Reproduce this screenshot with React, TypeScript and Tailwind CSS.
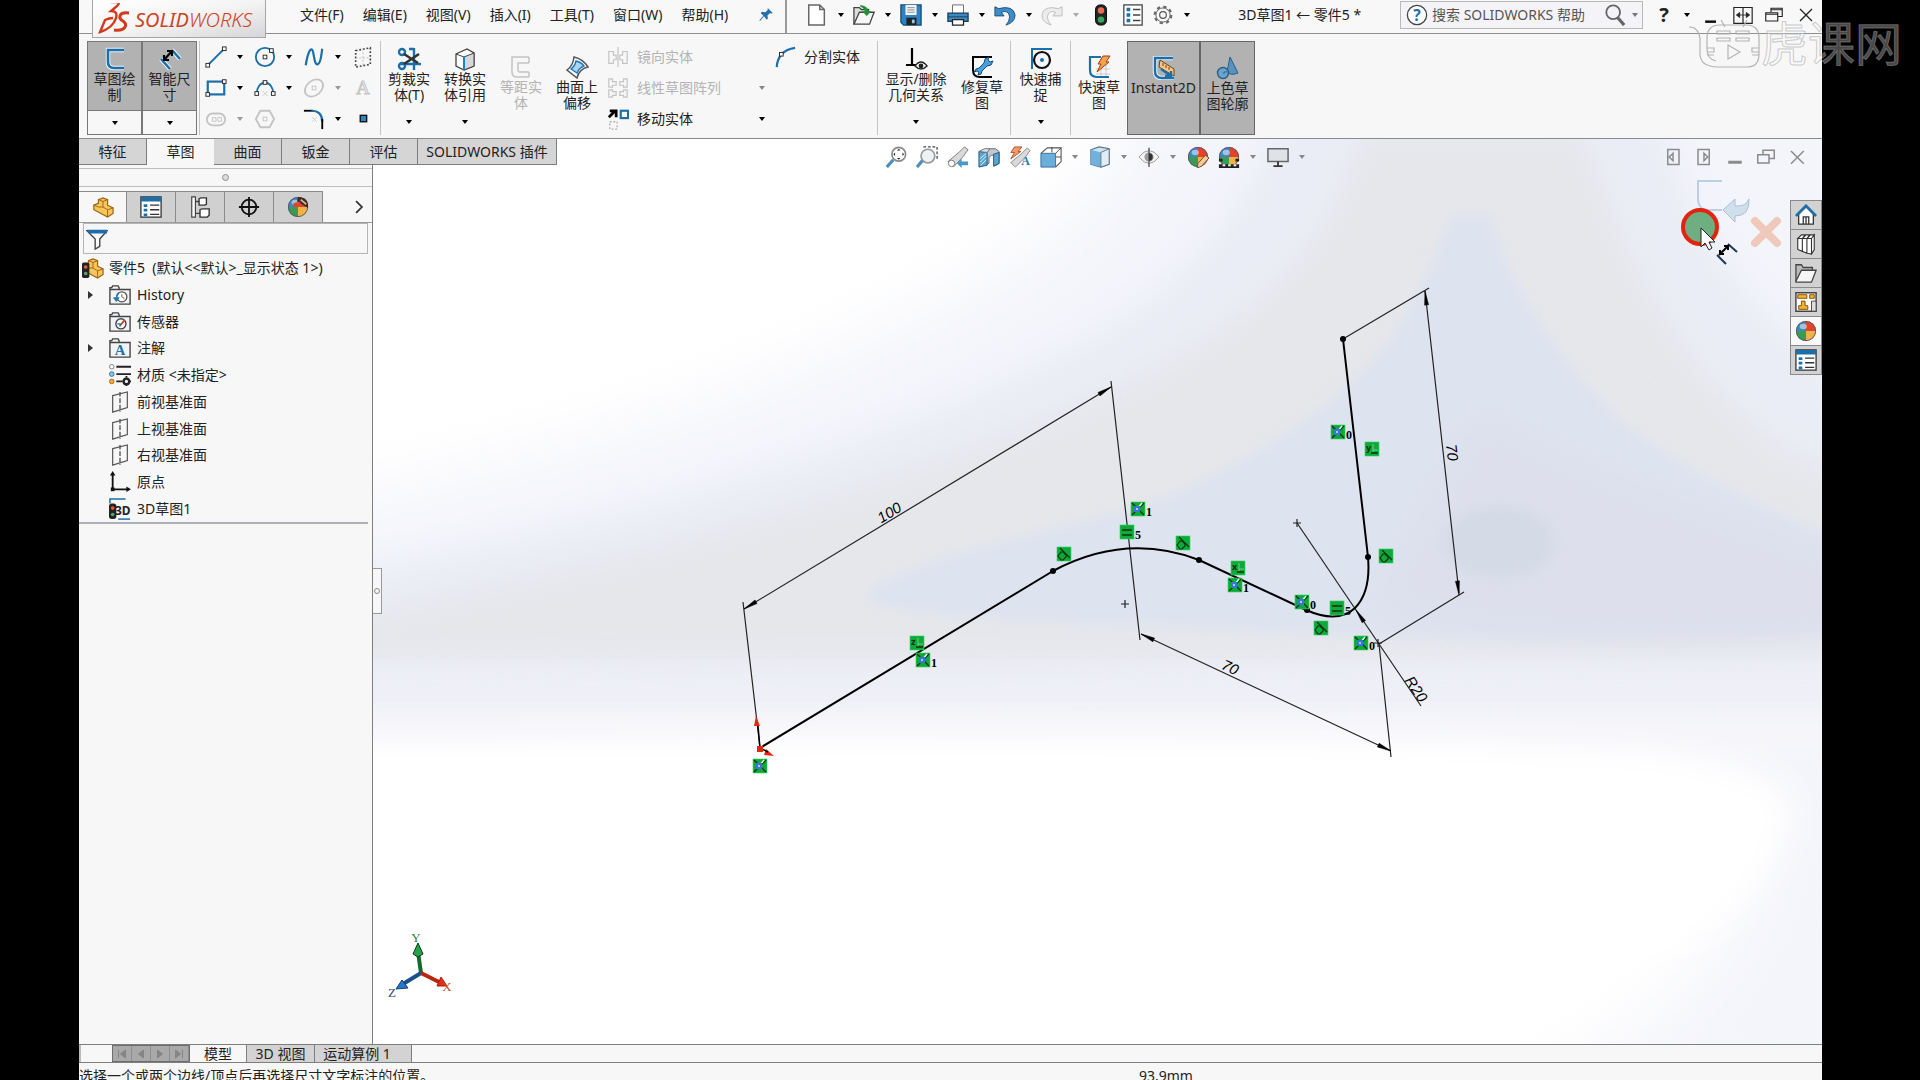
import React from "react";

type IconProps = { children: React.ReactNode; className?: string };

function Icon({ children, className = "w-6 h-6" }: IconProps) {
  return (
    <svg viewBox="0 0 24 24" fill="none" className={`shrink-0 ${className}`} aria-hidden="true">
      {children}
    </svg>
  );
}

function Caret({ className = "text-black" }: { className?: string }) {
  return (
    <svg viewBox="0 0 6 4" className={`w-[6px] h-[4px] ${className}`} aria-hidden="true">
      <path d="M0 0h6L3 4z" fill="currentColor" />
    </svg>
  );
}

function CaretButton({ label, className = "w-[23px]", tone }: { label: string; className?: string; tone?: string }) {
  return (
    <button aria-label={label} className={`flex h-6 shrink-0 items-center justify-center ${className}`}>
      <Caret className={tone} />
    </button>
  );
}

const BLUE = "#1d6fa9";
const GREY = "#c4c4c4";

const nodes = (points: number[][], color = "#222") =>
  points.map(([x, y]) => (
    <rect key={`${x}-${y}`} x={x - 2} y={y - 2} width="4" height="4" fill="#fff" stroke={color} />
  ));

/* ---------- icons ---------- */

const icons = {
  sketch: (
    <>
      <path d="M21 3H5v12q0 6 6 6h10" stroke="#e8f4fc" strokeWidth="4.5" />
      <path d="M21 3H5v12q0 6 6 6h10" stroke={BLUE} strokeWidth="2.6" />
    </>
  ),
  dimension: (
    <>
      <path d="M14 3l8 9M3 12l9 10" stroke="#e8f4fc" strokeWidth="4.5" />
      <path d="M14 3l8 9M3 12l9 10" stroke={BLUE} strokeWidth="2.5" />
      <path d="M6 13l8-9M6 8v5h5M9 4h5v5" stroke="#000" strokeWidth="2.2" />
    </>
  ),
  line: (
    <>
      <path d="M3 21L21 3" stroke={BLUE} strokeWidth="2" />
      {nodes([[3, 21], [21, 3]])}
    </>
  ),
  circle: (
    <>
      <circle cx="12" cy="12" r="10" stroke={BLUE} strokeWidth="2" />
      {nodes([[12, 12], [19, 5]])}
    </>
  ),
  spline: <path d="M3 21C5 8 8 2 10 4s2 17 6 16S20 8 21 3" stroke={BLUE} strokeWidth="2.4" />,
  plane: (
    <>
      <path d="M4 5l16-3v18L4 23z" stroke="#444" strokeWidth="1.8" strokeDasharray="2 2" />
      <path d="M12 3v19M4 13h16" stroke="#bbb" strokeDasharray="2 2" />
    </>
  ),
  rect: (
    <>
      <rect x="3" y="5" width="18" height="14" fill="#f8f8f8" stroke={BLUE} strokeWidth="2.4" />
      {nodes([[21, 5], [3, 19]])}
    </>
  ),
  arc: (
    <>
      <path d="M3 18a9 12 0 0 1 18 0" stroke={BLUE} strokeWidth="2" />
      <path d="M9 15l6 6M15 15l-6 6" stroke="#ccc" />
      {nodes([[3, 18], [12, 6], [21, 18]])}
    </>
  ),
  ellipse: (
    <>
      <ellipse cx="12" cy="12" rx="11" ry="8" transform="rotate(-40 12 12)" stroke={GREY} strokeWidth="2" />
      <rect x="10" y="10" width="4" height="4" stroke={GREY} />
    </>
  ),
  textA: (
    <text x="12" y="19" textAnchor="middle" fontSize="21" fontFamily="Liberation Serif" fill="#f0f0f0" stroke={GREY}>
      A
    </text>
  ),
  slot: (
    <>
      <rect x="2" y="6" width="20" height="13" rx="6.5" stroke={GREY} strokeWidth="2" />
      <path d="M8 10.500h4v4h-4zM14 10.500h4v4h-4z" stroke={GREY} />
    </>
  ),
  polygon: (
    <>
      <path d="M7 3h10l5 9-5 9H7l-5-9z" stroke={GREY} strokeWidth="2" />
      <rect x="10" y="10" width="4" height="4" stroke={GREY} />
    </>
  ),
  fillet: (
    <>
      <path d="M1 3h10" stroke="#000" strokeWidth="2" />
      <path d="M9 3q12 0 12 12" stroke={BLUE} strokeWidth="2.4" />
      <path d="M21 12v11" stroke="#000" strokeWidth="2" />
      <path d="M10 10l5 5M15 10l-5 5" stroke="#ccc" />
    </>
  ),
  point: <rect x="9" y="8" width="7" height="7" fill="#2f86bf" stroke="#111" strokeWidth="1.5" />,
  trim: (
    <>
      <path d="M12 2h5M17 1v22M3 17h21" stroke={BLUE} strokeWidth="2.4" />
      <circle cx="5" cy="5" r="3" stroke={BLUE} strokeWidth="2.4" />
      <circle cx="5" cy="19" r="3" stroke={BLUE} strokeWidth="2.4" />
      <path d="M7 7l14 9M7 17L22 7" stroke="#333" strokeWidth="2.6" />
    </>
  ),
  convert: (
    <>
      <path d="M3 7l11-5 7 4v13l-10 4-8-4z" fill="#fff" stroke="#444" strokeWidth="1.3" />
      <path d="M11 10l10-4v13l-10 4z" fill="#d5d8dc" stroke="#444" />
      <path d="M3 7l8 3" stroke="#444" />
      <path d="M11 10v13" stroke="#1683d0" strokeWidth="2" />
    </>
  ),
  offset: (
    <path d="M20 2H3v15q0 5 5 5h12M20 8H9v7q0 2 2 2h9M20 2v6M20 17v5" stroke={GREY} strokeWidth="1.5" />
  ),
  surface: (
    <>
      <path d="M2 15q6-4 7-13 9 2 14 10-9 2-11 11z" fill="#fff" stroke="#555" strokeWidth="1.5" />
      <path d="M6 14q4-3 5-8 5 1 8 5-5 2-7 7z" fill="#a9d4f5" stroke="#1d78c0" strokeWidth="1.4" />
    </>
  ),
  mirror: (
    <path d="M12 1v22M2 6h5v4h3v5H7v4H2zM22 6h-5v4h-3v5h3v4h5z" stroke={GREY} strokeWidth="1.3" />
  ),
  pattern: (
    <path
      d="M2 2h4v3h4v4H6v2H2zM22 2h-4v3h-4v4h4v2h4zM2 22h4v-2h4v-4H6v-2H2zM22 22h-4v-2h-4v-4h4v-2h4z"
      stroke={GREY}
      strokeWidth="1.3"
    />
  ),
  move: (
    <>
      <path d="M2 10l7-7M3 3h7v7" stroke="#000" strokeWidth="3" />
      <rect x="15" y="3" width="8" height="8" stroke={BLUE} strokeWidth="2.4" />
      <rect x="3" y="15" width="8" height="8" stroke="#aaa" strokeWidth="1.4" strokeDasharray="2 2" />
    </>
  ),
  split: (
    <>
      <path d="M3 23Q4 5 23 2" stroke={BLUE} strokeWidth="2.4" />
      {nodes([[8, 9]])}
    </>
  ),
  relations: (
    <>
      <path d="M8 1v17M2 18h12" stroke="#000" strokeWidth="2.2" />
      <path d="M11 19q6-8 12 0-6 6-12 0z" fill="#fff" stroke="#222" strokeWidth="1.4" />
      <circle cx="17" cy="19" r="2.4" fill="#222" />
    </>
  ),
  repair: (
    <>
      <path d="M22 2H3v13q0 7 7 7h12" stroke="#000" strokeWidth="2" />
      <path
        d="M8 20l3-1 1-3 5-5 4-1 2-4-3 1-2-2 1-3-4 2-1 4-5 5-3 1-2 3 3-1 2 1z"
        fill="#4aa0dc"
        stroke="#164d79"
      />
    </>
  ),
  snap: (
    <>
      <path d="M23 2H3v20" stroke={BLUE} strokeWidth="2" />
      <circle cx="13" cy="13" r="8" stroke="#111" strokeWidth="2.2" />
      <circle cx="13" cy="13" r="2" fill={BLUE} />
    </>
  ),
  rapid: (
    <>
      <path d="M9 14h14M9 19h14M14 8v14M19 8v14" stroke="#ccc" />
      <path d="M14 2H3v13q0 7 7 7h12" stroke={BLUE} strokeWidth="2.2" />
      <path d="M16 1h7l-4 6h3L10 17l4-8h-3z" fill="#f5a44a" stroke="#a43b12" />
    </>
  ),
  instant: (
    <>
      <path d="M21 2H3v13q0 7 7 7h12" stroke="#e8f4fc" strokeWidth="4.5" />
      <path d="M21 2H3v13q0 7 7 7h12" stroke={BLUE} strokeWidth="2.4" />
      <path d="M8 4l14 9v7L7 11z" fill="#fbc587" stroke="#6d4216" />
      <path d="M11 7v3M14 9v3M17 11v3" stroke="#6d4216" />
      <path d="M9 13l10 7M19 15v5h-6" stroke={BLUE} strokeWidth="2.4" />
    </>
  ),
  shaded: (
    <>
      <path d="M14 1l8 16q-7 3-11-1z" fill="#5793bd" stroke="#275d86" />
      <circle cx="7" cy="17" r="5.500" fill="#6ba4cb" stroke="#275d86" strokeWidth="1.4" />
      <path d="M11 16q-4-1-3 2" stroke="#275d86" />
    </>
  ),
  file: (
    <path d="M3 1h12l5 5v17H3zM15 1v5h5" fill="#fff" stroke="#666" strokeWidth="1.6" />
  ),
  open: (
    <>
      <path d="M1 22V4h6l2 2h8v5" fill="#ddd" stroke="#444" strokeWidth="1.4" />
      <path d="M1 22L7 9h16l-5 13z" fill="#f6f6f6" stroke="#444" strokeWidth="1.4" />
      <path d="M8 1q8 1 9 7h3l-5 5-5-5h3q-1-4-5-5z" fill="#22913a" />
    </>
  ),
  save: (
    <>
      <path d="M1 1h22v22H4l-3-3z" fill="#2e83c0" stroke="#15486f" strokeWidth="1.4" />
      <path d="M6 1h12v11H6z" fill="#f4f4f4" />
      <path d="M8 4h8M8 6.500h8M8 9h8" stroke="#888" />
      <path d="M7 15h11v8H7z" fill="#222" />
      <path d="M13 17h3v4h-3z" fill="#9ac8ec" />
    </>
  ),
  print: (
    <>
      <path d="M6 1h12v10H6z" fill="#fff" stroke="#666" />
      <path d="M1 10h22v9H1z" fill="#3c8ac2" stroke="#173d5b" strokeWidth="1.4" />
      <path d="M1 14h22" stroke="#173d5b" />
      <path d="M6 17h12v6H6z" fill="#fff" stroke="#222" strokeWidth="1.4" />
    </>
  ),
  undo: (
    <path d="M1 3v10h10L8 9q8-3 9 5 0 5-4 9 10-3 10-11Q21 1 5 5z" fill="#3c8dc8" stroke="#174e78" />
  ),
  redo: (
    <path d="M23 3v10H13l3-4q-8-3-9 5 0 5 4 9Q1 20 1 12 3 1 19 5z" fill="#ececec" stroke="#bbb" />
  ),
  light: (
    <>
      <rect x="6" y="1" width="12" height="22" rx="5" fill="#1d2724" stroke="#000" />
      <circle cx="12" cy="7" r="3.500" fill="#f2694f" />
      <circle cx="12" cy="17" r="3.500" fill="#35a85c" />
    </>
  ),
  options: (
    <>
      <rect x="2" y="1" width="20" height="22" fill="#fff" stroke="#444" strokeWidth="1.4" />
      <path d="M5 4h4v4H5zM5 10h4v4H5zM5 16h4v4H5z" fill={BLUE} />
      <path d="M12 6h8M12 12h8M12 18h8" stroke="#444" strokeWidth="1.4" />
    </>
  ),
  gear: (
    <>
      <circle cx="12" cy="12" r="10" stroke="#666" strokeWidth="2.5" strokeDasharray="4 3.854" />
      <circle cx="12" cy="12" r="8.500" fill="#f7f7f7" stroke="#666" strokeWidth="1.200" />
      <circle cx="12" cy="12" r="4" stroke="#555" strokeWidth="1.400" />
    </>
  ),
  pin: (
    <path d="M15 2l7 7-2 1-2-1-4 4 1 4-2 2-4-5-6 7-1-1 6-7-4-4 2-2 5 1 4-4-1-1z" fill="#2372ab" />
  ),
  zoomFit: (
    <>
      <circle cx="15" cy="9" r="7.500" fill="#fff" stroke="#888" strokeWidth="1.8" />
      <path d="M15 3l2 2h-4zM15 15l2-2h-4zM9 9l2-2v4zM21 9l-2-2v4z" fill="#333" />
      <path d="M9 15l-7 8" stroke="#4e90bd" strokeWidth="3.500" />
    </>
  ),
  zoomArea: (
    <>
      <path d="M8 1h15v15" stroke="#444" strokeWidth="1.4" strokeDasharray="3 2" />
      <circle cx="13" cy="11" r="7.500" fill="#eef2f5" stroke="#999" strokeWidth="1.8" />
      <path d="M7 16l-6 7" stroke="#4e90bd" strokeWidth="3.500" />
    </>
  ),
  prevView: (
    <>
      <path d="M1 17L13 7l6-6 4 3-5 7-11 12z" fill="#dadada" stroke="#777" />
      <circle cx="5" cy="19" r="3.500" fill="#fff" stroke="#777" />
      <path d="M23 17h-7v-3l-5 5 5 5v-3h7z" fill="#4a97c9" />
    </>
  ),
  section: (
    <>
      <path d="M9 6l4-3h6l4 3v13l-5 3V10h-3l-3 2v7l-3 1z" fill="#c3c8cc" stroke="#667" />
      <path d="M1 6l9 1v14l-9 2z" fill="#5ca6d4" stroke="#1f557c" />
      <path d="M1 6l6-3h6l-3 4z" fill="#e2e5e8" stroke="#667" />
      <path d="M2 14l7-6M2 18l7-7M3 21l6-6" stroke="#e5f4ff" />
      <path d="M17 9l6-2v12l-6 3z" fill="#5ca6d4" stroke="#1f557c" />
    </>
  ),
  annotView: (
    <>
      <path d="M6 1h8l-4 5h3L2 14l4-7H2z" fill="#f59a6a" stroke="#a8502a" />
      <path d="M2 18L14 8l6-6 3 3-5 7L7 23z" fill="#dadada" stroke="#888" />
      <text x="18" y="21" textAnchor="middle" fontSize="13" fontWeight="700" fontFamily="Liberation Serif" fill="#2b78ae">
        A
      </text>
    </>
  ),
  orient: (
    <>
      <path d="M1 8l7-6h15v15l-6 6" fill="#fff" stroke="#555" strokeWidth="1.200" />
      <path d="M17 8l6-6M13 1v6M16 12h7" stroke="#444" />
      <path d="M1 8h16v15H1z" fill="#6aaedb" stroke="#386f96" />
    </>
  ),
  display: (
    <>
      <path d="M2 4l9-3 11 2v17l-9 3-11-3z" fill="#cfe3f1" stroke="#5d7485" strokeWidth="1.200" />
      <path d="M2 4l11 3v16l-11-3z" fill="#71b2dc" />
      <path d="M13 7l9-4v17l-9 3z" fill="#e1ecf4" stroke="#5d7485" />
    </>
  ),
  eye: (
    <>
      <path d="M1 12q11-14 22 0-11 14-22 0z" fill="#f4f4f4" stroke="#999" />
      <circle cx="12" cy="12" r="5" fill="#9a9a9a" />
      <path d="M12 2v21" stroke="#555" strokeWidth="1.500" />
      <path d="M12 8a4 4 0 0 1 0 8z" fill="#333" />
    </>
  ),
  monitor: (
    <>
      <path d="M1 3h22v14H1z" fill="#dfe3e8" stroke="#666" strokeWidth="1.600" />
      <path d="M12 17v4M7 22h10" stroke="#333" strokeWidth="2" />
    </>
  ),
};

function Ball({ children }: { children?: React.ReactNode }) {
  return (
    <Icon className="w-[22px] h-[22px]">
      <path d="M12 12V1A11 11 0 0 0 1 12z" fill="#3f86c2" />
      <path d="M12 12V1a11 11 0 0 1 11 11z" fill="#e0452b" />
      <path d="M12 12H1a11 11 0 0 0 11 11z" fill="#3b9b54" />
      <path d="M12 12h11a11 11 0 0 1-11 11z" fill="#f1b24a" />
      <circle cx="12" cy="12" r="10.500" stroke="#556" />
      <ellipse cx="9" cy="7" rx="4" ry="3" fill="#fff" opacity="0.5" />
      {children}
    </Icon>
  );
}

const brick = (
  <path
    d="M2 10l5-2V4l5-2 5 2v6l6 3v6l-6 4L2 15z"
    fill="#f8c55c"
    stroke="#9a6412"
    strokeWidth="1.300"
  />
);
const brickEdges = <path d="M7 4l5 2 5-2M12 6v6l5 3 6-2M17 15v8M2 10l5 2 5 0" stroke="#9a6412" />;

const listIcon = (
  <>
    <path d="M1 1h22v22H1z" fill="#fff" stroke="#333" strokeWidth="1.400" />
    <path d="M1 1h22v5H1z" fill={BLUE} />
    <path d="M4 9h4v3H4zM4 14h4v3H4zM4 19h4v3H4z" fill={BLUE} />
    <path d="M11 10h10M11 15h10M11 20h10" stroke="#333" strokeWidth="1.400" />
  </>
);

const folder = <path d="M1 22V4h2l1-2h6l1 2v2h12v16zM1 6h10" fill="#f2f3f5" stroke="#444" strokeWidth="1.500" />;

/* ---------- top bar ---------- */

const menus = ["文件(F)", "编辑(E)", "视图(V)", "插入(I)", "工具(T)", "窗口(W)", "帮助(H)"];

const quickTools: { label: string; icon: React.ReactNode; tone?: string }[] = [
  { label: "新建", icon: icons.file },
  { label: "打开", icon: icons.open },
  { label: "保存", icon: icons.save },
  { label: "打印", icon: icons.print },
  { label: "撤消", icon: icons.undo },
  { label: "重做", icon: icons.redo, tone: "text-[#aaaaaa]" },
];

function Logo() {
  return (
    <div className="relative z-10 ml-[13px] flex h-[38px] w-[174px] shrink-0 items-center gap-2 self-start border border-t-0 border-[#a6a6a6] bg-gradient-to-br from-white via-[#f4f4f4] to-[#d6d6d8] pl-[5px]">
      <svg viewBox="0 0 32 32" className="h-8 w-8 shrink-0" fill="none" aria-hidden="true">
        <path d="M13 -1h7q2 1-1 4l-6 5q7 0 5 7-3 10-16 14l5-12q4-2 8-2" stroke="#d23a1e" strokeWidth="2.400" />
        <path d="M31 10q-8-1-9 3-1 3 3 5 4 3 2 6-2 4-11 3" stroke="#d23a1e" strokeWidth="3" />
      </svg>
      <span className="-ml-[3px] mt-[2px] text-[20px] font-light italic leading-[22px] text-[#d0421f]">
        <b>SOLID</b>WORKS
      </span>
    </div>
  );
}

function TopBar() {
  return (
    <header className="flex h-[34px] shrink-0 items-center border-b border-[#8f8f8f] bg-[#f8f8f8] pb-[3px]">
      <Logo />
      <nav className="ml-[34px] flex shrink-0 gap-[19px]">
        {menus.map((menu) => (
          <button key={menu} className="whitespace-nowrap">
            {menu}
          </button>
        ))}
      </nav>
      <button aria-label="固定" className="ml-[30px] shrink-0">
        <Icon className="h-4 w-4">{icons.pin}</Icon>
      </button>
      <div className="ml-[11px] h-[33px] w-[2px] shrink-0 self-start bg-[#9a9a9a]" />
      <div className="ml-[18px] flex shrink-0 items-center">
        {quickTools.map((tool) => (
          <React.Fragment key={tool.label}>
            <button aria-label={tool.label} className="flex w-6 justify-center">
              <Icon className="h-[22px] w-[22px]">{tool.icon}</Icon>
            </button>
            <CaretButton label={`${tool.label}选项`} tone={tool.tone} />
          </React.Fragment>
        ))}
        <button aria-label="重建模型" className="flex w-7 justify-center">
          <Icon className="h-[22px] w-[22px]">{icons.light}</Icon>
        </button>
        <button aria-label="文件属性" className="flex w-9 justify-center">
          <Icon className="h-[22px] w-[22px]">{icons.options}</Icon>
        </button>
        <button aria-label="选项" className="flex w-6 justify-center">
          <Icon className="h-5 w-5">{icons.gear}</Icon>
        </button>
        <CaretButton label="选项菜单" />
      </div>
      <h1 className="ml-[40px] whitespace-nowrap">3D草图1 ← 零件5 *</h1>
      <label className="ml-auto flex h-[28px] w-[243px] shrink-0 items-center border border-[#b9b9b9] bg-[#f4f4f8] px-[5px]">
        <Icon className="h-[22px] w-[22px]">
          <circle cx="12" cy="12" r="10.500" fill="#fff" stroke="#444" strokeWidth="1.400" />
          <text x="12" y="18" textAnchor="middle" fontSize="17" fontWeight="700" fill="#1d6fa9">
            ?
          </text>
        </Icon>
        <input
          aria-label="搜索"
          placeholder="搜索 SOLIDWORKS 帮助"
          className="ml-[4px] w-[172px] bg-transparent outline-none placeholder:text-[#555555]"
        />
        <Icon className="h-[22px] w-[22px]">
          <circle cx="10" cy="9" r="7.500" stroke="#666" strokeWidth="2" />
          <path d="M15 15l7 8" stroke="#666" strokeWidth="3.500" />
        </Icon>
        <span className="ml-[6px]">
          <Caret className="text-[#777777]" />
        </span>
      </label>
      <button aria-label="帮助" className="ml-1 w-[34px] shrink-0 text-[20px] font-bold leading-6 text-[#222222]">
        ?
      </button>
      <CaretButton label="帮助菜单" className="w-3" />
      <button aria-label="最小化" className="flex w-9 shrink-0 justify-center">
        <Icon className="h-5 w-5">
          <path d="M5 20h13" stroke="#111" strokeWidth="3" />
        </Icon>
      </button>
      <button aria-label="跨屏" className="flex w-7 shrink-0 justify-center">
        <Icon className="h-5 w-5">
          <path d="M1 3h22v19H1zM12 3v19" stroke="#222" strokeWidth="1.400" />
          <path d="M4 12l4-3v6zM20 12l-4-3v6zM6 12h12" fill="#222" stroke="#222" />
        </Icon>
      </button>
      <button aria-label="还原" className="flex w-[34px] shrink-0 justify-center">
        <Icon className="h-[18px] w-[18px]">
          <path d="M8 8V3h15v11h-6M8 5h15M1 9h16v11H1zM1 11h16" stroke="#222" strokeWidth="1.500" />
        </Icon>
      </button>
      <button aria-label="关闭" className="mr-px flex w-[30px] shrink-0 justify-center">
        <Icon className="h-4 w-4">
          <path d="M3 3l18 18M21 3L3 21" stroke="#222" strokeWidth="2" />
        </Icon>
      </button>
    </header>
  );
}

/* ---------- ribbon ---------- */

type BigButtonProps = {
  icon: React.ReactNode;
  lines: string[];
  width?: string;
  caret?: boolean;
  disabled?: boolean;
};

function BigButton({ icon, lines, width = "w-[56px]", caret, disabled }: BigButtonProps) {
  return (
    <button
      disabled={disabled}
      className={`flex h-[94px] shrink-0 flex-col items-center leading-4 ${width} ${caret ? "pt-[6px]" : "pt-[14px]"} ${
        disabled ? "text-[#b4b4b4]" : ""
      }`}
    >
      <Icon>{icon}</Icon>
      {lines.map((line) => (
        <span key={line} className="whitespace-nowrap">
          {line}
        </span>
      ))}
      {caret && (
        <span className="mt-[17px]">
          <Caret />
        </span>
      )}
    </button>
  );
}

function Pressed({ icon, lines, width = "w-[55px]" }: BigButtonProps) {
  return (
    <button
      aria-pressed="true"
      className={`flex h-[94px] shrink-0 flex-col items-center border border-[#666666] bg-[#b2b2b2] pt-[14px] leading-4 ${width}`}
    >
      <Icon>{icon}</Icon>
      {lines.map((line) => (
        <span key={line}>{line}</span>
      ))}
    </button>
  );
}

function PressedSplit({ icon, lines }: BigButtonProps) {
  return (
    <div className="flex h-[94px] w-[55px] shrink-0 flex-col border border-[#777777]">
      <button aria-pressed="true" className="flex h-[70px] flex-col items-center bg-[#b2b2b2] pt-[5px] leading-4">
        <Icon>{icon}</Icon>
        {lines.map((line) => (
          <span key={line}>{line}</span>
        ))}
      </button>
      <CaretButton label={`${lines.join("")}选项`} className="w-full grow border-t border-[#777777]" />
    </div>
  );
}

function Divider() {
  return <div className="h-[94px] w-px shrink-0 bg-[#c4c4c4]" />;
}

const drawTools: { label: string; icon: React.ReactNode; caret?: boolean; off?: boolean }[] = [
  { label: "直线", icon: icons.line, caret: true },
  { label: "圆", icon: icons.circle, caret: true },
  { label: "样条曲线", icon: icons.spline, caret: true },
  { label: "基准面", icon: icons.plane },
  { label: "边角矩形", icon: icons.rect, caret: true },
  { label: "圆弧", icon: icons.arc, caret: true },
  { label: "椭圆", icon: icons.ellipse, caret: true, off: true },
  { label: "文本", icon: icons.textA, off: true },
  { label: "直槽口", icon: icons.slot, caret: true, off: true },
  { label: "多边形", icon: icons.polygon, off: true },
  { label: "圆角", icon: icons.fillet, caret: true },
  { label: "点", icon: icons.point },
];

const entityTools = [
  { label: "镜向实体", icon: icons.mirror, off: true, caret: false },
  { label: "线性草图阵列", icon: icons.pattern, off: true, caret: true },
  { label: "移动实体", icon: icons.move, off: false, caret: true },
];

function Ribbon() {
  return (
    <section className="flex h-[105px] shrink-0 border-b border-[#8a8a8a] bg-[#f7f7f7] pl-[8px] pt-[7px]">
      <PressedSplit icon={icons.sketch} lines={["草图绘", "制"]} />
      <PressedSplit icon={icons.dimension} lines={["智能尺", "寸"]} />
      <div className="ml-[2px] flex">
        <Divider />
      </div>
      <div className="ml-[3px] mr-[5px] grid h-[94px] w-[172px] shrink-0 grid-cols-[49px_49px_49px_25px] grid-rows-3">
        {drawTools.map((tool) => (
          <div key={tool.label} className="flex items-center">
            <button aria-label={tool.label} disabled={tool.off} className="flex w-[25px] justify-center">
              <Icon className="h-[22px] w-[22px]">{tool.icon}</Icon>
            </button>
            {tool.caret && (
              <CaretButton label={`${tool.label}选项`} className="w-6" tone={tool.off ? "text-[#999999]" : undefined} />
            )}
          </div>
        ))}
      </div>
      <Divider />
      <BigButton icon={icons.trim} lines={["剪裁实", "体(T)"]} caret />
      <BigButton icon={icons.convert} lines={["转换实", "体引用"]} caret />
      <BigButton icon={icons.offset} lines={["等距实", "体"]} disabled />
      <BigButton icon={icons.surface} lines={["曲面上", "偏移"]} />
      <div className="ml-[2px] grid h-[94px] w-[167px] shrink-0 grid-rows-3">
        {entityTools.map((tool) => (
          <div key={tool.label} className="flex items-center justify-between">
            <button
              disabled={tool.off}
              className={`flex items-center gap-[8px] whitespace-nowrap ${tool.off ? "text-[#b4b4b4]" : ""}`}
            >
              <Icon className="h-[22px] w-[22px]">{tool.icon}</Icon>
              {tool.label}
            </button>
            {tool.caret && (
              <CaretButton label={`${tool.label}选项`} className="w-6" tone={tool.off ? "text-[#888888]" : undefined} />
            )}
          </div>
        ))}
      </div>
      <button className="flex h-[31px] w-[103px] shrink-0 items-center gap-[8px] whitespace-nowrap">
        <Icon className="h-[22px] w-[22px]">{icons.split}</Icon>
        分割实体
      </button>
      <Divider />
      <BigButton icon={icons.relations} lines={["显示/删除", "几何关系"]} width="w-[76px]" caret />
      <BigButton icon={icons.repair} lines={["修复草", "图"]} />
      <Divider />
      <BigButton icon={icons.snap} lines={["快速捕", "捉"]} width="w-[59px]" caret />
      <Divider />
      <BigButton icon={icons.rapid} lines={["快速草", "图"]} />
      <Pressed icon={icons.instant} lines={["Instant2D"]} width="w-[73px]" />
      <Pressed icon={icons.shaded} lines={["上色草", "图轮廓"]} />
    </section>
  );
}

/* ---------- tabs and view toolbar ---------- */

const commandTabs = [
  { label: "特征", width: "w-[68px]" },
  { label: "草图", width: "w-[67px]", active: true },
  { label: "曲面", width: "w-[68px]" },
  { label: "钣金", width: "w-[68px]" },
  { label: "评估", width: "w-[68px]" },
  { label: "SOLIDWORKS 插件", width: "w-[139px]" },
];

const viewTools: { label: string; node: React.ReactNode; caret?: boolean }[] = [
  { label: "整屏显示全图", node: <Icon className="h-[22px] w-[22px]">{icons.zoomFit}</Icon> },
  { label: "局部放大", node: <Icon className="h-[22px] w-[22px]">{icons.zoomArea}</Icon> },
  { label: "上一视图", node: <Icon className="h-[22px] w-[22px]">{icons.prevView}</Icon> },
  { label: "剖面视图", node: <Icon className="h-[22px] w-[22px]">{icons.section}</Icon> },
  { label: "动态注解视图", node: <Icon className="h-[22px] w-[22px]">{icons.annotView}</Icon> },
  { label: "视图定向", node: <Icon className="h-[22px] w-[22px]">{icons.orient}</Icon>, caret: true },
  { label: "显示样式", node: <Icon className="h-[22px] w-[22px]">{icons.display}</Icon>, caret: true },
  { label: "隐藏/显示项目", node: <Icon className="h-[22px] w-[22px]">{icons.eye}</Icon>, caret: true },
  {
    label: "编辑外观",
    node: (
      <Ball>
        <path d="M20 10l4 3-8 9-5 2 1-5z" fill="#f3cda0" stroke="#70451e" />
      </Ball>
    ),
  },
  {
    label: "应用布景",
    node: (
      <Ball>
        <path d="M1 14h4v3H1zM19 14h4v3h-4zM1 20h22v4H1z" fill="#222" />
        <path d="M5 20h3v2H5zM11 20h3v2h-3zM17 20h3v2h-3z" fill="#eee" />
      </Ball>
    ),
    caret: true,
  },
  { label: "视图设置", node: <Icon className="h-[22px] w-[22px]">{icons.monitor}</Icon>, caret: true },
];

const paneButtons = [
  { label: "左窗格", d: "M5 2h15v20H5zM7 12l5-5v10z" },
  { label: "右窗格", d: "M4 2h15v20H4zM17 12l-5-5v10z" },
  { label: "最小化窗口", d: "M4 18h16v2H4z" },
  { label: "还原窗口", d: "M8 9V3h15v11h-7M1 9h15v11H1z" },
  { label: "关闭窗口", d: "M4 4l17 17M21 4L4 21" },
];

function TabRow() {
  return (
    <div className="flex h-[26px] shrink-0 items-start">
      <div role="tablist" className="flex h-[26px] w-[478px] shrink-0">
        {commandTabs.map((tab) => (
          <button
            key={tab.label}
            role="tab"
            aria-selected={!!tab.active}
            className={`h-[26px] shrink-0 whitespace-nowrap ${tab.width} ${
              tab.active ? "bg-[#f7f7f7]" : "border-b border-r border-[#7d7d7d] bg-[#d5d5d5]"
            }`}
          >
            {tab.label}
          </button>
        ))}
      </div>
      <div className="ml-auto mr-[151px] flex h-[36px] items-center pl-4">
        {viewTools.map((tool) => (
          <div key={tool.label} className="flex items-center">
            <button aria-label={tool.label} className="flex w-[31px] justify-center">
              {tool.node}
            </button>
            {tool.caret && <CaretButton label={`${tool.label}选项`} className="w-[18px]" tone="text-[#888888]" />}
          </div>
        ))}
      </div>
      <div className="ml-[195px] mr-[10px] flex h-[36px] items-center">
        {paneButtons.map((button) => (
          <button key={button.label} aria-label={button.label} className="flex w-[31px] justify-center">
            <Icon className="h-[18px] w-[18px]">
              <path d={button.d} stroke="#8b8b8b" strokeWidth="2" />
            </Icon>
          </button>
        ))}
      </div>
    </div>
  );
}

/* ---------- feature tree ---------- */

const treeTabs = [
  { label: "特征树", active: true, node: <Icon className="h-[22px] w-[22px]">{brick}{brickEdges}</Icon> },
  { label: "属性管理器", node: <Icon className="h-[22px] w-[22px]">{listIcon}</Icon> },
  {
    label: "配置管理器",
    node: (
      <Icon className="h-[22px] w-[22px]">
        <path d="M5 4v18M5 6h7M5 19h8" stroke="#444" strokeWidth="1.500" />
        <path d="M3 1h4v22H3z" fill="#fff" stroke="#444" strokeWidth="1.300" />
        <path d="M11 3l2-1h6v7l-2 1h-6zM12 15l2-1h8v7l-2 2h-8z" fill="#fff" stroke="#333" strokeWidth="1.500" />
      </Icon>
    ),
  },
  {
    label: "尺寸专家",
    node: (
      <Icon className="h-[22px] w-[22px]">
        <circle cx="12" cy="12" r="8" stroke="#111" strokeWidth="2" />
        <path d="M12 1v22M1 12h22" stroke="#111" strokeWidth="2" />
      </Icon>
    ),
  },
  {
    label: "外观管理器",
    node: (
      <Ball>
        <path d="M12 1q12 0 11 12L11 6z" fill="#3a2a22" />
        <path d="M15 4l6 5" stroke="#dcb28c" strokeWidth="2" />
        <path d="M7 8l7-2 2 6H7z" fill="#e0452b" />
      </Ball>
    ),
  },
];

const planeIcon = (
  <>
    <path d="M4 5l16-4v17L4 23z" stroke="#555" strokeWidth="1.300" />
    <path d="M12 1v22" stroke="#555" strokeWidth="1.500" strokeDasharray="5 2" />
  </>
);

const treeItems: { label: string; icon: React.ReactNode; arrow?: boolean }[] = [
  {
    label: "History",
    arrow: true,
    icon: (
      <>
        {folder}
        <circle cx="14" cy="14" r="5.500" fill="#fff" stroke="#555" strokeWidth="1.400" />
        <path d="M14 11v3l3 2" stroke="#555" />
        <path d="M5 15h6l-3 4zM8 15q0-5 4-6" fill="#2178b8" stroke="#2178b8" />
      </>
    ),
  },
  {
    label: "传感器",
    icon: (
      <>
        {folder}
        <circle cx="13" cy="14" r="5.500" fill="#fff" stroke="#444" strokeWidth="1.500" />
        <path d="M12 16l5-6" stroke="#d8432a" strokeWidth="2" />
        <path d="M9 14h3v3" stroke="#2178b8" strokeWidth="1.500" />
      </>
    ),
  },
  {
    label: "注解",
    arrow: true,
    icon: (
      <>
        {folder}
        <text x="12" y="20" textAnchor="middle" fontSize="16" fontWeight="700" fontFamily="Liberation Serif" fill="#2272ac">
          A
        </text>
      </>
    ),
  },
  {
    label: "材质 <未指定>",
    icon: (
      <>
        <path d="M8 3h16M8 11h16M8 19h5" stroke="#222" strokeWidth="2" />
        <circle cx="3" cy="3" r="2.500" fill="#fff" stroke="#777" />
        <circle cx="3" cy="11" r="2.500" fill="#8ec5ec" stroke="#2a6c9c" />
        <circle cx="3" cy="19" r="2.500" fill="#f5b041" stroke="#a8650d" />
        <circle cx="19" cy="19" r="3" stroke="#222" strokeWidth="2.500" />
        <path d="M19 13v2M19 22v2M13 19h2M22 19h2" stroke="#222" strokeWidth="2" />
      </>
    ),
  },
  { label: "前视基准面", icon: planeIcon },
  { label: "上视基准面", icon: planeIcon },
  { label: "右视基准面", icon: planeIcon },
  {
    label: "原点",
    icon: (
      <>
        <path d="M4 4v16h16" stroke="#111" strokeWidth="2" />
        <path d="M4 0l3 5H1zM24 20l-5 3v-6z" fill="#111" />
        <rect x="2" y="18" width="4" height="4" fill="#111" />
      </>
    ),
  },
  {
    label: "3D草图1",
    icon: (
      <>
        <path d="M1 6V1h17" stroke={BLUE} strokeWidth="1.600" />
        <path d="M10 23h13" stroke={BLUE} strokeWidth="1.600" />
        <text x="15" y="18" textAnchor="middle" fontSize="13" fontWeight="700" fill="#222">
          3D
        </text>
        <rect x="0" y="6" width="8" height="17" rx="3" fill="#222" />
        <circle cx="4" cy="11" r="2" fill="#ef5a3c" />
        <circle cx="4" cy="18" r="2" fill="#58a06e" />
      </>
    ),
  },
];

function FeatureTree() {
  return (
    <aside className="relative flex w-[294px] shrink-0 flex-col border-r border-[#7e7e7e] bg-[#f7f7f7]">
      <div className="mt-[3px] flex h-[19px] shrink-0 items-center justify-center border-b border-t border-[#bdbdbd]">
        <span className="h-[7px] w-[7px] rounded-full border border-[#8f8f8f] bg-[#dcdcdc]" />
      </div>
      <div className="mt-[4px] flex h-[32px] shrink-0 items-stretch border-b border-[#9b9b9b]">
        {treeTabs.map((tab) => (
          <button
            key={tab.label}
            aria-label={tab.label}
            className={`flex items-center justify-center border-r border-t border-[#8a8a8a] ${
              tab.active ? "w-[48px] bg-[#f7f7f7]" : "w-[49px] bg-[#d0d0d0]"
            }`}
          >
            {tab.node}
          </button>
        ))}
        <button aria-label="展开" className="ml-auto flex w-[20px] items-center justify-start">
          <Icon className="h-[14px] w-[14px]">
            <path d="M7 2l10 10L7 22" stroke="#333" strokeWidth="3" />
          </Icon>
        </button>
      </div>
      <label className="mx-[4px] flex h-[31px] shrink-0 items-center border border-[#b5b5b5] pl-[2px]">
        <Icon className="h-[22px] w-[22px]">
          <path d="M1 3h22l-8 9v8l-5 3V12z" fill="#fff" stroke="#444" strokeWidth="1.500" />
          <path d="M1 2h22v4H3z" fill={BLUE} />
        </Icon>
        <input aria-label="过滤" className="w-full bg-transparent px-2 outline-none" />
      </label>
      <ul className="mr-[4px] mt-px grid h-[269px] shrink-0 grid-rows-10 border-b-2 border-[#a9b0b8]">
        <li className="flex items-center gap-[5px] whitespace-pre pl-[3px]">
          <Icon className="h-[22px] w-[22px]">
            {brick}
            {brickEdges}
            <rect x="0" y="6" width="8" height="17" rx="2" fill="#222" />
            <circle cx="4" cy="11" r="2" fill="#ef5a3c" />
            <circle cx="4" cy="18" r="2" fill="#58a06e" />
          </Icon>
          {"零件5  (默认<<默认>_显示状态 1>)"}
        </li>
        {treeItems.map((item) => (
          <li key={item.label} className="flex items-center pl-[9px]">
            <span className="w-[21px]">
              {item.arrow && (
                <svg viewBox="0 0 5 8" className="h-[8px] w-[5px]" aria-hidden="true">
                  <path d="M0 0l5 4-5 4z" fill="#333" />
                </svg>
              )}
            </span>
            <Icon className="h-[22px] w-[22px]">{item.icon}</Icon>
            <span className="ml-[6px]">{item.label}</span>
          </li>
        ))}
      </ul>
    </aside>
  );
}

/* ---------- graphics area ---------- */

const badges: { x: number; y: number; kind: "x" | "tan" | "eq" | "axis"; n?: string; letter?: string }[] = [
  { x: 1064, y: 554, kind: "tan" },
  { x: 1183, y: 543, kind: "tan" },
  { x: 1321, y: 628, kind: "tan" },
  { x: 1386, y: 556, kind: "tan" },
  { x: 1138, y: 509, kind: "x", n: "1" },
  { x: 1127, y: 532, kind: "eq", n: "5" },
  { x: 1238, y: 568, kind: "axis", letter: "x" },
  { x: 1235, y: 585, kind: "x", n: "1" },
  { x: 1302, y: 602, kind: "x", n: "0" },
  { x: 1337, y: 608, kind: "eq", n: "5" },
  { x: 1361, y: 643, kind: "x", n: "0" },
  { x: 1338, y: 432, kind: "x", n: "0" },
  { x: 1372, y: 449, kind: "axis", letter: "y" },
  { x: 917, y: 643, kind: "axis", letter: "z" },
  { x: 923, y: 660, kind: "x", n: "1" },
  { x: 760, y: 766, kind: "x" },
];

function Badge({ x, y, kind, n, letter }: (typeof badges)[number]) {
  return (
    <g transform={`translate(${x} ${y})`}>
      <rect x="-7" y="-7" width="14" height="14" fill="#0fa83a" stroke="#35d562" strokeWidth="0.6" />
      {kind === "x" && (
        <>
          <path d="M-6 -6L6 6M6 -6L-6 6" stroke="#05320f" strokeWidth="1.2" />
          <path d="M0 -1L4 -6" stroke="#e9fff0" strokeWidth="1.4" />
          <rect x="-4" y="-3" width="6" height="6" fill="#3b74d6" />
          <rect x="-2" y="-1" width="2" height="2" fill="#a9c7f7" />
        </>
      )}
      {kind === "tan" && (
        <>
          <path d="M-6 2l3-4h2l3 3v2l-3 3h-2z" stroke="#05320f" fill="none" strokeWidth="1.200" />
          <path d="M-4 -6L6 4" stroke="#05320f" strokeWidth="1.200" />
        </>
      )}
      {kind === "eq" && <path d="M-5 -2H5M-5 3H5" stroke="#05320f" strokeWidth="1.500" />}
      {kind === "axis" && (
        <>
          <text x="-6" y="2" fontSize="9" fontWeight="700" fill="#05320f">
            {letter}
          </text>
          <path d="M-1 4H6" stroke="#05320f" strokeWidth="1.500" />
          <path d="M1 -5V3M1 1H6" stroke="#6fcf88" />
        </>
      )}
      {n && (
        <text x="8" y="7" fontSize="12" fontWeight="700" fontFamily="Liberation Serif" fill="#000">
          {n}
        </text>
      )}
    </g>
  );
}

// Arrow head with its tip on (x, y), pointing along the given angle.
function Head({ x, y, a }: { x: number; y: number; a: number }) {
  return <path transform={`translate(${x} ${y}) rotate(${a})`} d="M0 0L-14 -2L-14 2Z" fill="#000" stroke="#000" strokeWidth="0.5" />;
}

function Viewport() {
  return (
    <svg
      viewBox="79 139 1743 905"
      preserveAspectRatio="xMidYMid slice"
      className="absolute inset-0 h-full w-full"
      fill="none"
      role="img"
      aria-label="3D草图"
    >
      <defs>
        <filter id="soft" x="-20%" y="-20%" width="140%" height="140%">
          <feGaussianBlur stdDeviation="16" />
        </filter>
        <filter id="wide" x="-20%" y="-20%" width="140%" height="140%">
          <feGaussianBlur stdDeviation="34" />
        </filter>
        <filter id="edge" x="-20%" y="-20%" width="140%" height="140%">
          <feGaussianBlur stdDeviation="6" />
        </filter>
      </defs>
      <rect x="79" y="139" width="1743" height="905" fill="#fff" />
      <path d="M300 510Q760 420 1010 260Q1120 190 1160 60H1900V1100H1500Q1760 1000 1760 800Q1500 720 300 720Z" fill="#f4f5fb" filter="url(#wide)" />
      <path d="M300 580Q800 490 1080 340Q1240 250 1280 100H1660Q1700 300 1900 410V700H300Z" fill="#ebedf6" filter="url(#soft)" />
      <path d="M300 625Q800 530 1110 390Q1310 300 1370 160H1580Q1620 330 1740 430L1900 500V650Q1200 670 300 660Z" fill="#e6e7eb" filter="url(#soft)" />
      <path d="M1360 130H1580Q1640 330 1780 460L1700 480Q1560 380 1500 200H1400Q1330 370 1200 420L1150 400Q1340 300 1360 130Z" fill="#e6e7eb" filter="url(#soft)" />
      <path d="M868 595Q870 570 1130 510Q1300 450 1390 340Q1430 280 1450 215H1490Q1520 320 1620 420Q1720 500 1900 560V630Q1500 650 1150 625Q870 620 868 595Z" fill="#dde3ef" filter="url(#edge)" />
      <path d="M1480 420Q1640 500 1900 580V625Q1560 660 1380 600Z" fill="#dddfec" filter="url(#soft)" />
      <ellipse cx="1500" cy="542" rx="56" ry="37" fill="#d4dbe6" filter="url(#edge)" />
      <path d="M300 670H1900V730H300Z" fill="#eeeff7" filter="url(#soft)" />
      <path d="M300 710H1900V750H300Z" fill="#f6f6fa" filter="url(#soft)" />
      <path d="M300 750Q1000 725 1640 750Q1800 770 1790 815Q1760 960 1500 990L1000 1030H300Z" fill="#fff" filter="url(#soft)" />

      {/* dimensions */}
      <g stroke="#222" strokeWidth="1.200">
        <path d="M743 602L760 748M744 609L1111 387M1111 381L1140 640" />
        <path d="M1141 634L1391 751M1379 644L1391 757" />
        <path d="M1343 339L1429 288M1425 291L1459 593M1379 644L1464 592" />
        <path d="M1297 523L1421 706" />
        <path d="M1293 523h8M1297 519v8M1121 604h8M1125 600v8M1374 643h8M1378 639v8" />
      </g>
      <Head x={744} y={609} a={149} />
      <Head x={1111} y={387} a={-31} />
      <Head x={1141} y={634} a={205} />
      <Head x={1391} y={751} a={25} />
      <Head x={1425} y={291} a={-96.5} />
      <Head x={1459} y={595} a={83.5} />
      <Head x={1356} y={610} a={236} />
      <g
        fill="#000"
        fontSize="15"
        fontFamily="'Liberation Sans Narrow', 'Liberation Sans', sans-serif"
        fontStyle="italic"
        textAnchor="middle"
      >
        <text transform="translate(892 517) rotate(-31)">100</text>
        <text transform="translate(1228 672) rotate(25)">70</text>
        <text transform="translate(1447 453) rotate(83.5)">70</text>
        <text transform="translate(1412 692) rotate(56)">R20</text>
      </g>

      {/* sketch */}
      <path
        d="M760 748L1053 571Q1126 532 1199 560L1306 610Q1338 624 1355 608Q1371 592 1368 557L1343 339"
        stroke="#000"
        strokeWidth="2"
      />
      {[[1053, 571], [1199, 560], [1307, 610], [1368, 557], [1343, 339]].map(([x, y]) => (
        <circle key={x} cx={x} cy={y} r="3" fill="#000" />
      ))}
      <path d="M756 716l4 10h-6zM774 756l-10-1 2-6z" fill="#df2a12" />
      <path d="M758 726l2 22 8 4" stroke="#000" strokeWidth="1.500" />
      <rect x="757" y="746" width="6" height="6" fill="#df2a12" />
      {badges.map((badge) => (
        <Badge key={`${badge.x}-${badge.y}`} {...badge} />
      ))}

      {/* triad */}
      <path d="M421 973L418 952" stroke="#12692a" strokeWidth="4" />
      <path d="M421 973L403 984" stroke="#174f91" strokeWidth="4" />
      <path d="M421 973L439 982" stroke="#b8260f" strokeWidth="4" />
      <path d="M418 943l5 11-5 3-5-3z" fill="#27a24a" stroke="#0b3a16" />
      <path d="M396 989l6-9 6 8z" fill="#2874c6" stroke="#153f70" />
      <path d="M447 986l-6-9-4 9z" fill="#e22e17" stroke="#a31d0b" />
      <g fontSize="13" fontFamily="Liberation Serif" textAnchor="middle">
        <text x="416" y="942" fill="#2b8245">Y</text>
        <text x="392" y="997" fill="#274b78">Z</text>
        <text x="447" y="991" fill="#c04a2e">X</text>
      </g>

      {/* confirmation corner */}
      <path d="M1722 181H1698V200Q1699 210 1708 210H1722" stroke="#b9cfe3" strokeWidth="2" />
      <path d="M1723 210L1735 199V206Q1746 207 1749 199Q1750 216 1735 216V222Z" fill="#cfdfec" stroke="#a9c0d4" />
      <path d="M1755 221L1777 243M1777 221L1755 243" stroke="#efcabb" strokeWidth="8" strokeLinecap="round" />
      <circle cx="1700" cy="227" r="17" fill="#6fae80" stroke="#e2230f" strokeWidth="4" />
      <path d="M1701 228V247L1705 243L1709 250L1712 248L1709 242H1715Z" fill="#fff" stroke="#222" />
      <path d="M1728 244l9 8M1717 255l9 9" stroke="#1a3d5c" strokeWidth="2" />
      <path d="M1719 255L1729 245M1720 250v4h4M1724 246h4v4" stroke="#000" strokeWidth="2" />
    </svg>
  );
}

const taskPane: { label: string; node: React.ReactNode; active?: boolean }[] = [
  {
    label: "主页",
    node: (
      <Icon className="h-[22px] w-[22px]">
        <path d="M4 11v11h16V11l-8-8z" fill="#fff" stroke="#333" strokeWidth="1.400" />
        <path d="M1 13L12 2l11 11" stroke={BLUE} strokeWidth="3" />
        <path d="M9 22v-8h6v8M12 14v8" stroke="#333" strokeWidth="1.400" />
      </Icon>
    ),
  },
  {
    label: "设计库",
    node: (
      <Icon className="h-[22px] w-[22px]">
        <path d="M3 6l4-4h4l-3 4zM8 6l4-4h4l-3 4zM13 6l4-4h4l-3 4zM3 6h5v14l-5-2zM8 6h5v16l-5-2zM13 6h5v17l-5-1zM18 6l3-4v16l-3 5z" fill="#fff" stroke="#333" strokeWidth="1.200" />
      </Icon>
    ),
  },
  {
    label: "文件探索器",
    node: (
      <Icon className="h-[22px] w-[22px]">
        <path d="M1 21V3h6l2 3h10v3" fill="#bbb" stroke="#444" strokeWidth="1.400" />
        <path d="M1 21L7 9h16l-5 13H1z" fill="#f6f6f6" stroke="#444" strokeWidth="1.400" />
      </Icon>
    ),
  },
  {
    label: "视图调色板",
    node: (
      <Icon className="h-[22px] w-[22px]">
        <path d="M1 2h22v20H1z" fill="#fff" stroke="#444" strokeWidth="1.600" />
        <path d="M3 4h10v4H3zM16 4h5v4h-5zM7 11h4v5h3v4H4v-4h3z" fill="#f3b12c" stroke="#7c4d0a" />
        <path d="M18 11h5v11h-5z" fill="#ddd" stroke="#444" />
      </Icon>
    ),
  },
  { label: "外观、布景和贴图", node: <Ball />, active: true },
  { label: "自定义属性", node: <Icon className="h-[22px] w-[22px]">{listIcon}</Icon> },
];

function Workspace() {
  return (
    <main className="relative flex min-h-0 grow flex-col overflow-hidden">
      <Viewport />
      <div className="relative flex min-h-0 grow flex-col">
        <TabRow />
        <div className="flex min-h-0 grow">
          <FeatureTree />
          <button
            aria-label="折叠面板"
            className="-ml-px mt-[403px] flex h-[46px] w-[10px] items-center justify-center border border-[#999999] bg-[#f7f7f7]"
          >
            <span className="h-[6px] w-[6px] rounded-full border border-[#888888]" />
          </button>
          <div className="ml-auto mt-[35px] flex w-[32px] flex-col self-start border-x border-b border-[#8a8a8a]">
            {taskPane.map((item) => (
              <button
                key={item.label}
                aria-label={item.label}
                className={`flex h-[29px] items-center justify-center border-t border-[#8a8a8a] ${
                  item.active ? "bg-[#f9f9f9]" : "bg-[#d2d2d2]"
                }`}
              >
                {item.node}
              </button>
            ))}
          </div>
        </div>
      </div>
    </main>
  );
}

/* ---------- bottom ---------- */

const navButtons = [
  { label: "第一个", d: "M5 4v16M19 4v16l-10-8z" },
  { label: "上一个", d: "M17 4v16L7 12z" },
  { label: "下一个", d: "M7 4v16l10-8z" },
  { label: "最后一个", d: "M19 4v16M5 4v16l10-8z" },
];

function Bottom() {
  return (
    <footer className="shrink-0 bg-[#f7f7f7]">
      <div className="flex h-[19px] items-stretch border-b border-t border-[#7e7e7e] leading-4">
        <div className="w-[2px] bg-[#bbbbbb]" />
        <div className="ml-[31px] flex w-[78px] border border-[#6d6d6d] bg-[#a9a9a9]">
          {navButtons.map((button) => (
            <button
              key={button.label}
              aria-label={button.label}
              className="flex grow items-center justify-center border-r border-[#8e8e8e]"
            >
              <Icon className="h-3 w-3">
                <path d={button.d} fill="#858585" stroke="#858585" strokeWidth="2" />
              </Icon>
            </button>
          ))}
        </div>
        <button className="w-[56px]">模型</button>
        <button className="w-[69px] border-r border-l border-[#7e7e7e] bg-[#d3d3d3]">3D 视图</button>
        <button className="w-[97px] border-r border-[#7e7e7e] bg-[#d3d3d3] pr-[12px]">运动算例 1</button>
      </div>
      <div className="flex h-[17px] items-start overflow-hidden pt-[5px] leading-4">
        <p className="w-[1060px] shrink-0 whitespace-nowrap">选择一个或两个边线/顶点后再选择尺寸文字标注的位置。</p>
        <p>93.9mm</p>
      </div>
    </footer>
  );
}

function Watermark() {
  return (
    <svg
      viewBox="0 0 220 60"
      className="pointer-events-none absolute right-[13px] top-[12px] z-20 h-[60px] w-[220px]"
      fill="none"
      aria-hidden="true"
    >
      <g stroke="#b4b4b4" strokeWidth="1.200">
        <path d="M2 15q10 0 11 12v16q1 9 10 11 3 1 8 1h29q12 0 12-13V26q0-13-13-13H33q-13 0-13 13v11q0 10 9 12" />
        <path d="M34 8l4 7M60 8l-4 7M30 19h13v3H30zM49 19h13v3H49zM30 26h13v3H30zM49 26h13v3H49zM20 36h7v4h-7M20 43h7M72 36h-7v4h7M72 43h-7" />
        <path d="M41 33l12 7-12 7z" />
      </g>
      <text
        x="74"
        y="49"
        fontSize="47"
        fill="#ffffff"
        fillOpacity="0.3"
        stroke="#9a9a9a"
        strokeOpacity="0.5"
        strokeWidth="1"
      >
        虎课网
      </text>
    </svg>
  );
}

export default function App() {
  return (
    <div className="relative h-screen overflow-hidden bg-black pl-[79px] pr-[98px] font-['Noto_Sans','Noto_Sans_CJK_SC',sans-serif] text-[14px] leading-5 text-[#222222]">
      <div className="flex h-full flex-col bg-[#f7f7f7]">
        <TopBar />
        <Ribbon />
        <Workspace />
        <Bottom />
      </div>
      <Watermark />
    </div>
  );
}
